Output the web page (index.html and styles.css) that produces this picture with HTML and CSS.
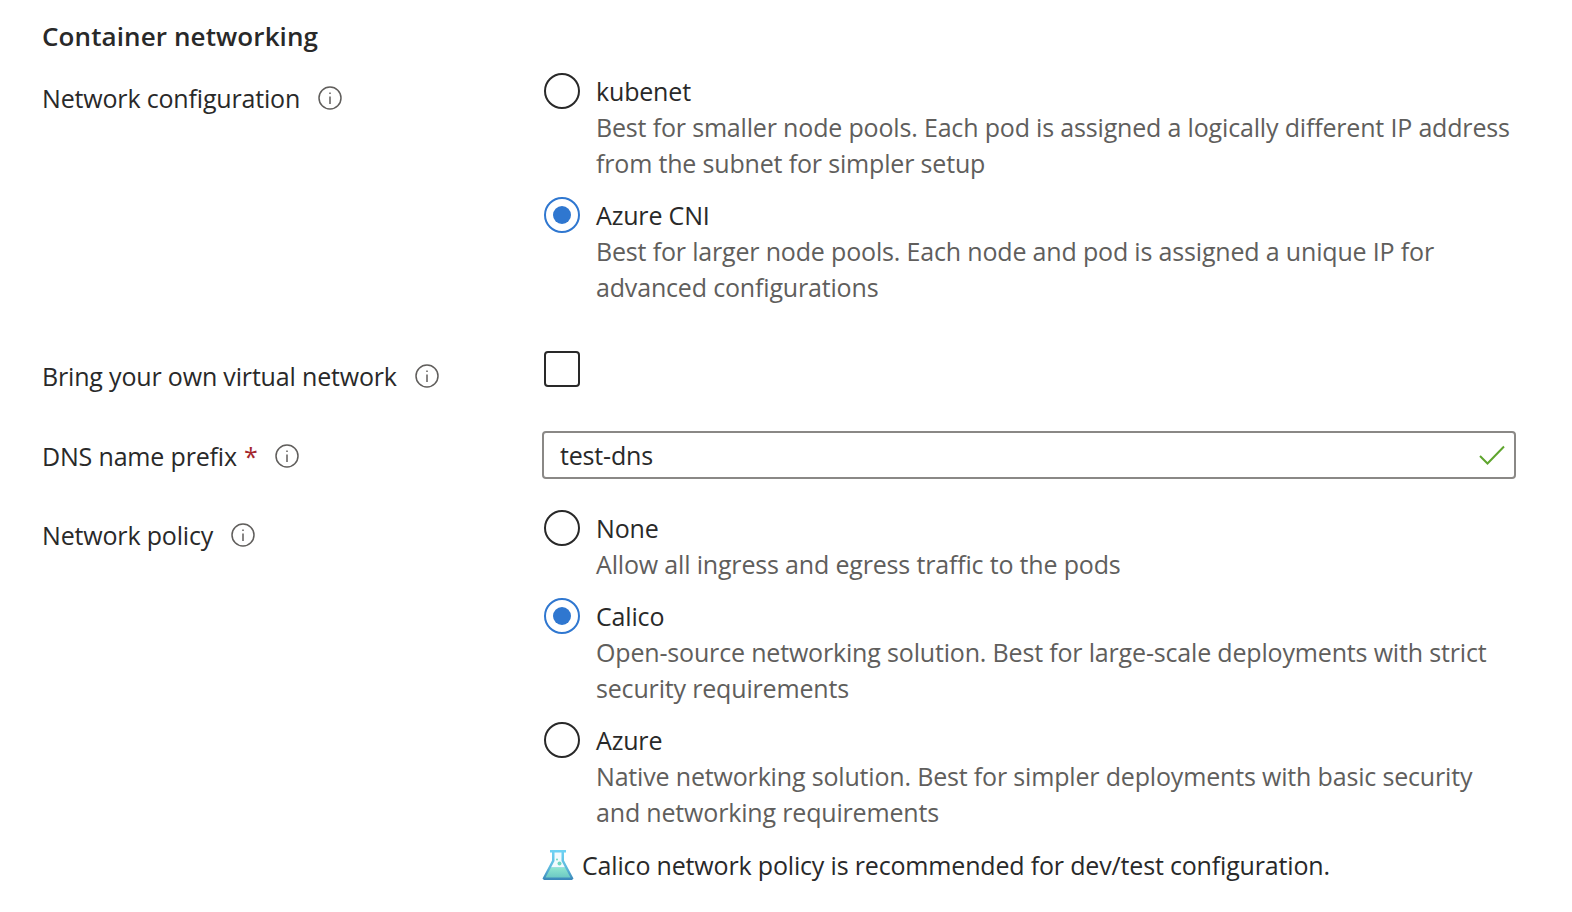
FILE: index.html
```html
<!DOCTYPE html>
<html lang="en">
<head>
    <meta charset="UTF-8">
    <title>Container networking</title>
    <link rel="stylesheet" href="styles.css">
</head>
<body>
    <div class="section">
        <h2 class="section-title">Container networking</h2>

        <!-- Network configuration -->
        <div class="form-row row-config">
            <div class="form-label">
                <span>Network configuration</span>
                <svg class="info-icon" viewBox="0 0 24 24"><circle cx="12" cy="12" r="11" /><path d="M12 10.500V18M12 6.500V8" /></svg>
            </div>
            <div class="radio-group">
                <div class="radio-item">
                    <span class="radio"></span>
                    <div class="radio-text">
                        <div class="radio-name">kubenet</div>
                        <div class="radio-desc">Best for smaller node pools. Each pod is assigned a logically different IP address from the subnet for simpler setup</div>
                    </div>
                </div>
                <div class="radio-item">
                    <span class="radio checked"></span>
                    <div class="radio-text">
                        <div class="radio-name">Azure CNI</div>
                        <div class="radio-desc">Best for larger node pools. Each node and pod is assigned a unique IP for advanced configurations</div>
                    </div>
                </div>
            </div>
        </div>

        <!-- Virtual network -->
        <div class="form-row row-vnet">
            <div class="form-label">
                <span>Bring your own virtual network</span>
                <svg class="info-icon" viewBox="0 0 24 24"><circle cx="12" cy="12" r="11" /><path d="M12 10.500V18M12 6.500V8" /></svg>
            </div>
            <div><span class="checkbox"></span></div>
        </div>

        <!-- DNS prefix -->
        <div class="form-row row-dns">
            <div class="form-label">
                <span>DNS name prefix</span>
                <span class="required">*</span>
                <svg class="info-icon" viewBox="0 0 24 24"><circle cx="12" cy="12" r="11" /><path d="M12 10.500V18M12 6.500V8" /></svg>
            </div>
            <div class="text-input">
                <span>test-dns</span>
                <svg class="check-icon" viewBox="0 0 26 20"><path d="M1 11L8.500 18.500L25 1.500" /></svg>
            </div>
        </div>

        <!-- Network policy -->
        <div class="form-row row-policy">
            <div class="form-label">
                <span>Network policy</span>
                <svg class="info-icon" viewBox="0 0 24 24"><circle cx="12" cy="12" r="11" /><path d="M12 10.500V18M12 6.500V8" /></svg>
            </div>
            <div class="radio-group">
                <div class="radio-item">
                    <span class="radio"></span>
                    <div class="radio-text">
                        <div class="radio-name">None</div>
                        <div class="radio-desc">Allow all ingress and egress traffic to the pods</div>
                    </div>
                </div>
                <div class="radio-item">
                    <span class="radio checked"></span>
                    <div class="radio-text">
                        <div class="radio-name">Calico</div>
                        <div class="radio-desc">Open-source networking solution. Best for large-scale deployments with strict security requirements</div>
                    </div>
                </div>
                <div class="radio-item">
                    <span class="radio"></span>
                    <div class="radio-text">
                        <div class="radio-name">Azure</div>
                        <div class="radio-desc">Native networking solution. Best for simpler deployments with basic security and networking requirements</div>
                    </div>
                </div>
            </div>
        </div>

        <div class="form-row row-note">
            <div></div>
            <div class="note">
                <svg class="flask-icon" viewBox="0 0 32 32">
                    <defs>
                        <linearGradient id="flaskBody" x1="0" y1="0" x2="0" y2="1">
                            <stop offset="0" stop-color="#6fd3f5" />
                            <stop offset="0.6" stop-color="#5cb8dc" />
                            <stop offset="1" stop-color="#3a86b8" />
                        </linearGradient>
                        <linearGradient id="flaskLiquid" x1="0" y1="0" x2="0" y2="1">
                            <stop offset="0" stop-color="#8fe6cf" />
                            <stop offset="1" stop-color="#6cc9c4" />
                        </linearGradient>
                    </defs>
                    <path d="M8 1H24V3.500H22V11.500L31.500 29.500L30 31H2L0.500 29.500L10 11.500V3.500H8Z" fill="url(#flaskBody)" />
                    <path d="M12.500 3.500H19.500V12L23 18.500H9L12.500 12Z" fill="#f2fbfe" />
                    <path d="M9 18.500H23L28.500 28.500H3.500Z" fill="url(#flaskLiquid)" />
                    <circle cx="17.500" cy="14.500" r="2" fill="#6fd8c0" />
                    <circle cx="15" cy="10.500" r="1" fill="#6fd8c0" />
                </svg>
                <span>Calico network policy is recommended for dev/test configuration.</span>
            </div>
        </div>
    </div>
</body>
</html>
```

FILE: styles.css
```css
* {
    margin: 0;
    padding: 0;
    box-sizing: border-box;
}

body {
    background-color: #fff;
    color: #292929;
    font-family: 'Open Sans', sans-serif;
    font-size: 25px;
    line-height: 36px;
    letter-spacing: -0.17px;
}

.section {
    padding: 18px 56px 0 42px;
}

.section-title {
    font-size: 26px;
    font-weight: 600;
    line-height: 36px;
    letter-spacing: 0.1px;
    margin-bottom: 19px;
}

.form-row {
    display: grid;
    grid-template-columns: 500px 1fr;
}

.row-vnet {
    margin-top: 46px;
}

.row-dns {
    margin-top: 37px;
}

.row-policy {
    margin-top: 31px;
}

.row-note {
    margin-top: 17px;
}

.form-label {
    display: flex;
    align-items: center;
    height: 36px;
    margin-top: 7px;
}

.info-icon {
    width: 24px;
    height: 24px;
    margin-left: 18px;
    fill: none;
    stroke: #605e5c;
    stroke-width: 1.5;
}

.required {
    color: #a4262c;
    margin-left: 7px;
}

.required + .info-icon {
    margin-left: 18px;
}

.radio-group {
    display: flex;
    flex-direction: column;
    gap: 16px;
}

.radio-item {
    display: flex;
    gap: 16px;
}

.radio {
    flex: none;
    width: 36px;
    height: 36px;
    margin-left: 2px;
    border: 2px solid #292929;
    border-radius: 50%;
    display: flex;
    align-items: center;
    justify-content: center;
}

.radio.checked {
    border-color: #2f77d0;
}

.radio.checked::after {
    content: "";
    width: 18px;
    height: 18px;
    border-radius: 50%;
    background-color: #2f77d0;
}

.radio-desc {
    color: #605e5c;
}

.checkbox {
    display: block;
    width: 36px;
    height: 36px;
    margin-left: 2px;
    border: 2px solid #292929;
    border-radius: 4px;
}

.text-input {
    display: flex;
    align-items: center;
    justify-content: space-between;
    height: 48px;
    padding: 0 9px 0 16px;
    border: 2px solid #8a8886;
    border-radius: 4px;
}

.check-icon {
    width: 26px;
    height: 20px;
    fill: none;
    stroke: #5fa52e;
    stroke-width: 2;
}

.note {
    display: flex;
    align-items: center;
    gap: 8px;
}

.flask-icon {
    width: 32px;
    height: 32px;
}
```
